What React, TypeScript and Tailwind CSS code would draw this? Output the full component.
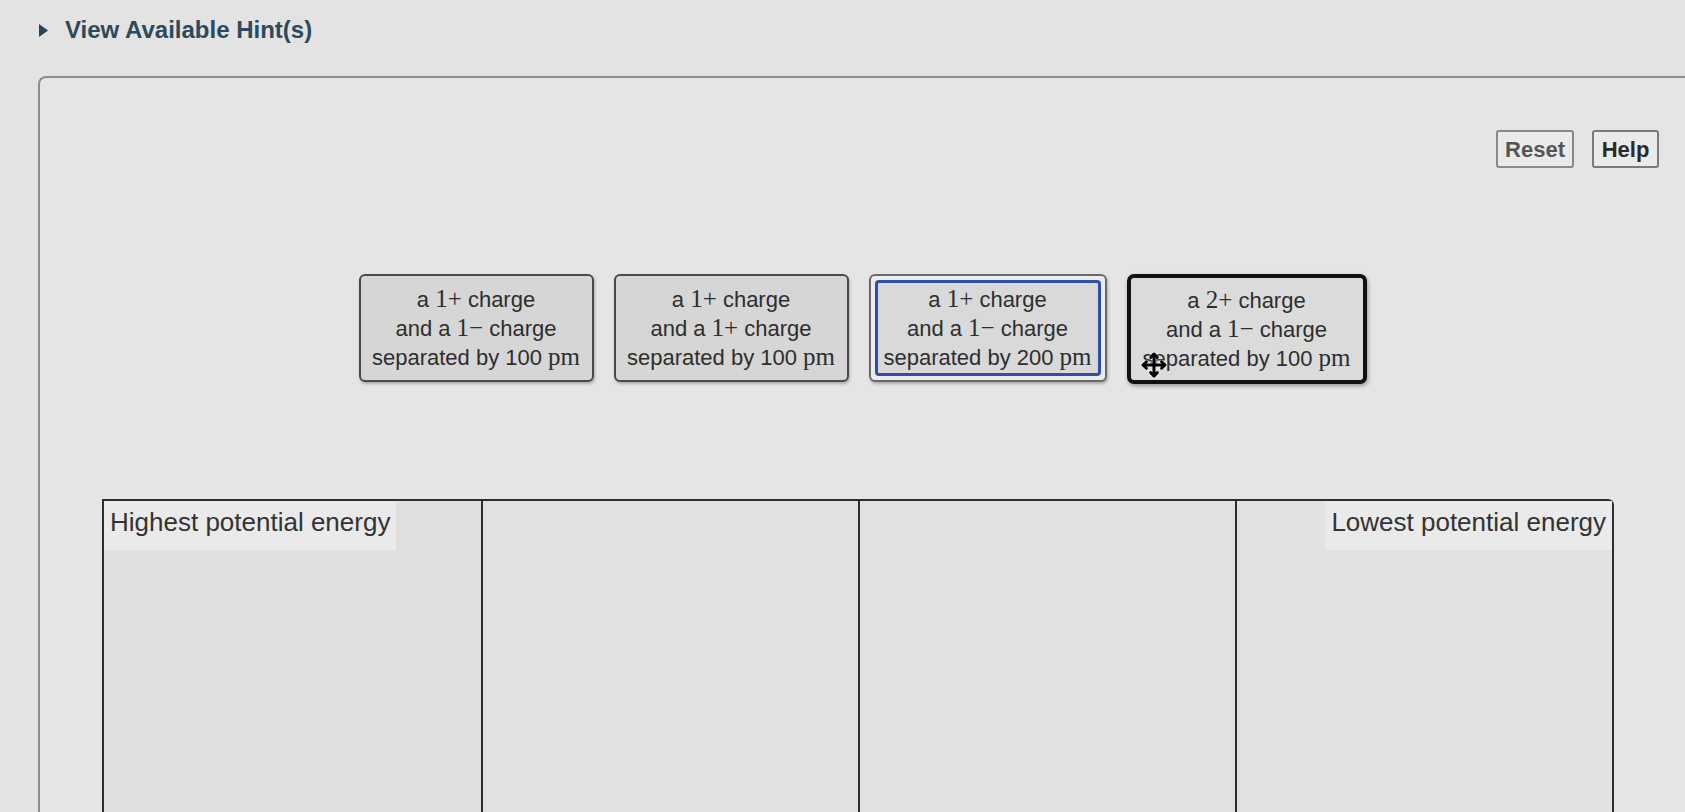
import { Move } from "lucide-react";

type Card = {
  first: string;
  second: string;
  distance: string;
  variant: "plain" | "focused" | "active";
};

const CARDS: Card[] = [
  { first: "1+", second: "1−", distance: "100", variant: "plain" },
  { first: "1+", second: "1+", distance: "100", variant: "plain" },
  { first: "1+", second: "1−", distance: "200", variant: "focused" },
  { first: "2+", second: "1−", distance: "100", variant: "active" },
];

const SERIF = "font-['Liberation_Serif',serif] text-[25px]";

function CardText({ card }: { card: Card }) {
  return (
    <div className="text-center text-[22px] leading-[28px] text-[#2e2e2e] whitespace-nowrap">
      <p>
        a <span className={SERIF}>{card.first}</span> charge
      </p>
      <p>
        and a <span className={SERIF}>{card.second}</span> charge
      </p>
      <p>
        separated by {card.distance} <span className={SERIF}>pm</span>
      </p>
    </div>
  );
}

function ChargeCard({ card }: { card: Card }) {
  if (card.variant === "focused") {
    return (
      <div className="w-[238px] h-[108px] rounded-[6px] border-2 border-[#6a6a6a] bg-[#ececec] p-[4px] shadow-[1px_2px_3px_rgba(0,0,0,0.25)]">
        <div className="h-full rounded-[4px] border-[3px] border-[#2f4fa8] bg-[#d8d9d8] flex items-center justify-center">
          <CardText card={card} />
        </div>
      </div>
    );
  }
  if (card.variant === "active") {
    return (
      <div className="relative w-[240px] h-[110px] rounded-[7px] border-[4px] border-[#111] bg-[#dadbda] flex items-center justify-center shadow-[1px_2px_4px_rgba(0,0,0,0.35)]">
        <CardText card={card} />
        <div className="absolute left-[10px] bottom-[2px] text-black">
          <Move className="w-[26px] h-[26px] drop-shadow-[0_0_1px_#fff]" strokeWidth={2.8} />
        </div>
      </div>
    );
  }
  return (
    <div className="w-[235px] h-[108px] rounded-[6px] border-2 border-[#4a4a4a] bg-[#d5d6d5] flex items-center justify-center shadow-[1px_2px_3px_rgba(0,0,0,0.25)]">
      <CardText card={card} />
    </div>
  );
}

export default function App() {
  return (
    <div className="h-[812px] overflow-hidden bg-[#e2e3e2] font-['Liberation_Sans',Arial,sans-serif]">
      <div className="flex items-center gap-[16px] pl-[38px] pt-[12px]">
        <svg width="11" height="15" viewBox="0 0 11 15">
          <path d="M1 1 L10 7.5 L1 14 Z" fill="#264556" />
        </svg>
        <h2 className="text-[24px] font-bold text-[#2c4a5b]">View Available Hint(s)</h2>
      </div>

      <div className="ml-[38px] mt-[28px] h-[760px] rounded-tl-[8px] border-l-2 border-t-2 border-[#8c8d8c] bg-[#e4e5e4]">
        <div className="flex justify-end gap-[18px] pr-[26px] pt-[52px]">
          <button className="h-[38px] w-[78px] rounded-[3px] border-2 border-[#8a8a8a] bg-[#e9eae9] text-[22px] font-bold text-[#555]">
            Reset
          </button>
          <button className="h-[38px] w-[67px] rounded-[3px] border-2 border-[#7a7a7a] bg-[#e9eae9] text-[22px] font-bold text-[#2a2a2a]">
            Help
          </button>
        </div>

        <div className="mt-[106px] flex items-start justify-center gap-[20px]">
          {CARDS.map((c, i) => (
            <ChargeCard key={i} card={c} />
          ))}
        </div>

        <div className="mt-[115px] ml-[62px] mr-[71px] grid h-[320px] grid-cols-4 rounded-tr-[6px] border-2 border-b-0 border-[#2e2e2e]">
          <div className="bg-[#dedfde]">
            <span className="inline-block bg-[#e9eae9] px-[6px] pt-[2px] pb-[8px] text-[26px] text-[#333]">
              Highest potential energy
            </span>
          </div>
          <div className="border-l-2 border-[#2e2e2e] bg-[#e0e1e0]" />
          <div className="border-l-2 border-[#2e2e2e] bg-[#e0e1e0]" />
          <div className="flex justify-end items-start border-l-2 border-[#2e2e2e] bg-[#e1e2e1]">
            <span className="inline-block bg-[#e9eae9] px-[6px] pt-[2px] pb-[8px] text-[26px] text-[#333]">
              Lowest potential energy
            </span>
          </div>
        </div>
      </div>
    </div>
  );
}
